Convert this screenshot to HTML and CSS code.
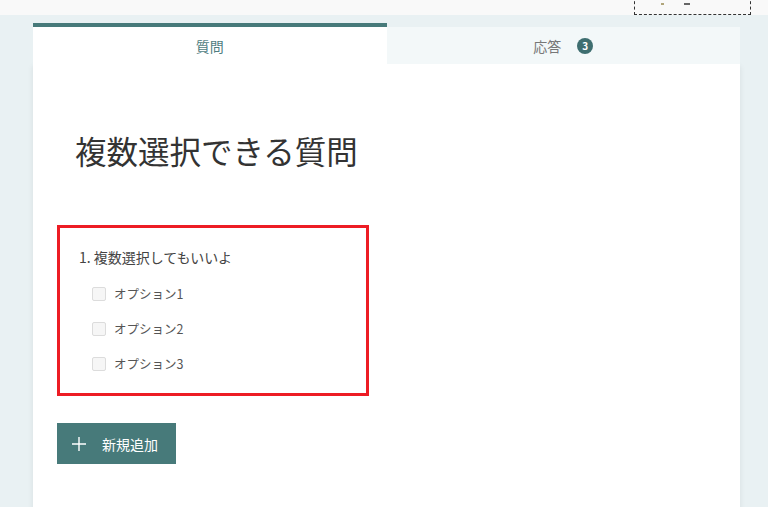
FILE: index.html
```html
<!DOCTYPE html>
<html lang="ja">
<head>
<meta charset="utf-8">
<link rel="stylesheet" href="styles.css">
</head>
<body>
<div class="topbar">
  <div class="dashbox"><span class="mark"></span><span class="mark dark"></span></div>
</div>
<main class="main">
  <div class="tabs">
    <div class="tab active">質問</div>
    <div class="tab">応答<span class="badge">3</span></div>
  </div>
  <section class="card">
    <h1 class="title">複数選択できる質問</h1>
    <div class="question">
      <div class="qtext"><span class="qnum">1.</span>複数選択してもいいよ</div>
      <div class="option"><span class="box"></span><span>オプション1</span></div>
      <div class="option"><span class="box"></span><span>オプション2</span></div>
      <div class="option"><span class="box"></span><span>オプション3</span></div>
    </div>
    <button class="add">
      <svg class="plus" width="14" height="14" viewBox="0 0 14 14"><path d="M7 0V14M0 7H14" stroke="#fff" stroke-width="1.4" fill="none"/></svg>
      <span>新規追加</span>
    </button>
  </section>
</main>
</body>
</html>
```

FILE: styles.css
```css
* { box-sizing: border-box; }
html, body { margin: 0; padding: 0; }
body {
  width: 768px;
  height: 507px;
  overflow: hidden;
  background: #e9f1f3;
  font-family: "Noto Sans CJK JP", "Noto Sans", sans-serif;
}
.topbar {
  height: 15px;
  background: #f9f9f9;
  display: flex;
  justify-content: flex-end;
  align-items: flex-end;
  padding-right: 17px;
  overflow: hidden;
}
.dashbox {
  width: 117px;
  height: 30px;
  border: 1px dashed #333;
  border-top: none;
  display: flex;
  align-items: flex-end;
  gap: 20px;
  padding: 0 0 9px 26px;
}
.mark { width: 3px; height: 2px; background: #b0a57a; }
.mark.dark { width: 6px; background: #666; }
.main {
  padding: 8px 28px 0 33px;
}
.tabs {
  display: flex;
  align-items: flex-end;
  height: 41px;
}
.tab {
  flex: 1;
  height: 37px;
  background: #f3f8f9;
  color: #777;
  font-size: 14px;
  display: flex;
  align-items: center;
  justify-content: center;
}
.tab.active {
  height: 41px;
  background: #fff;
  border-top: 4px solid #477a7a;
  color: #4f7d7f;
}
.badge {
  width: 16px;
  height: 16px;
  border-radius: 50%;
  background: #3e6e70;
  color: #fff;
  font-size: 10px;
  font-weight: bold;
  margin-left: 16px;
  display: flex;
  align-items: center;
  justify-content: center;
  line-height: 1;
}
.card {
  background: #fff;
  box-shadow: 0 2px 6px rgba(0, 0, 0, 0.08);
  height: 460px;
  padding: 66px 24px 0 24px;
}
.title {
  margin: 0 0 55px 18px;
  font-size: 31.5px;
  line-height: 40px;
  font-weight: 400;
  color: #333;
}
.question {
  width: 312px;
  height: 171px;
  border: 3px solid #ed1c24;
  padding: 19px 0 0 19px;
}
.qtext {
  font-size: 14px;
  line-height: 20px;
  color: #444;
  margin-bottom: 9px;
}
.qnum { margin-right: 3px; }
.option {
  height: 35px;
  display: flex;
  align-items: center;
  padding-left: 13px;
  gap: 8px;
  font-size: 12.5px;
  color: #555;
}
.box {
  width: 14px;
  height: 14px;
  border: 1px solid #dcdcdc;
  border-radius: 2px;
  background: #f6f6f6;
}
.add {
  margin-top: 27px;
  width: 119px;
  height: 41px;
  background: #477a7a;
  border: none;
  display: flex;
  align-items: center;
  gap: 16px;
  padding: 0 0 0 15px;
  color: #fff;
  font-family: inherit;
  font-size: 14px;
}
.plus { display: block; }
```
